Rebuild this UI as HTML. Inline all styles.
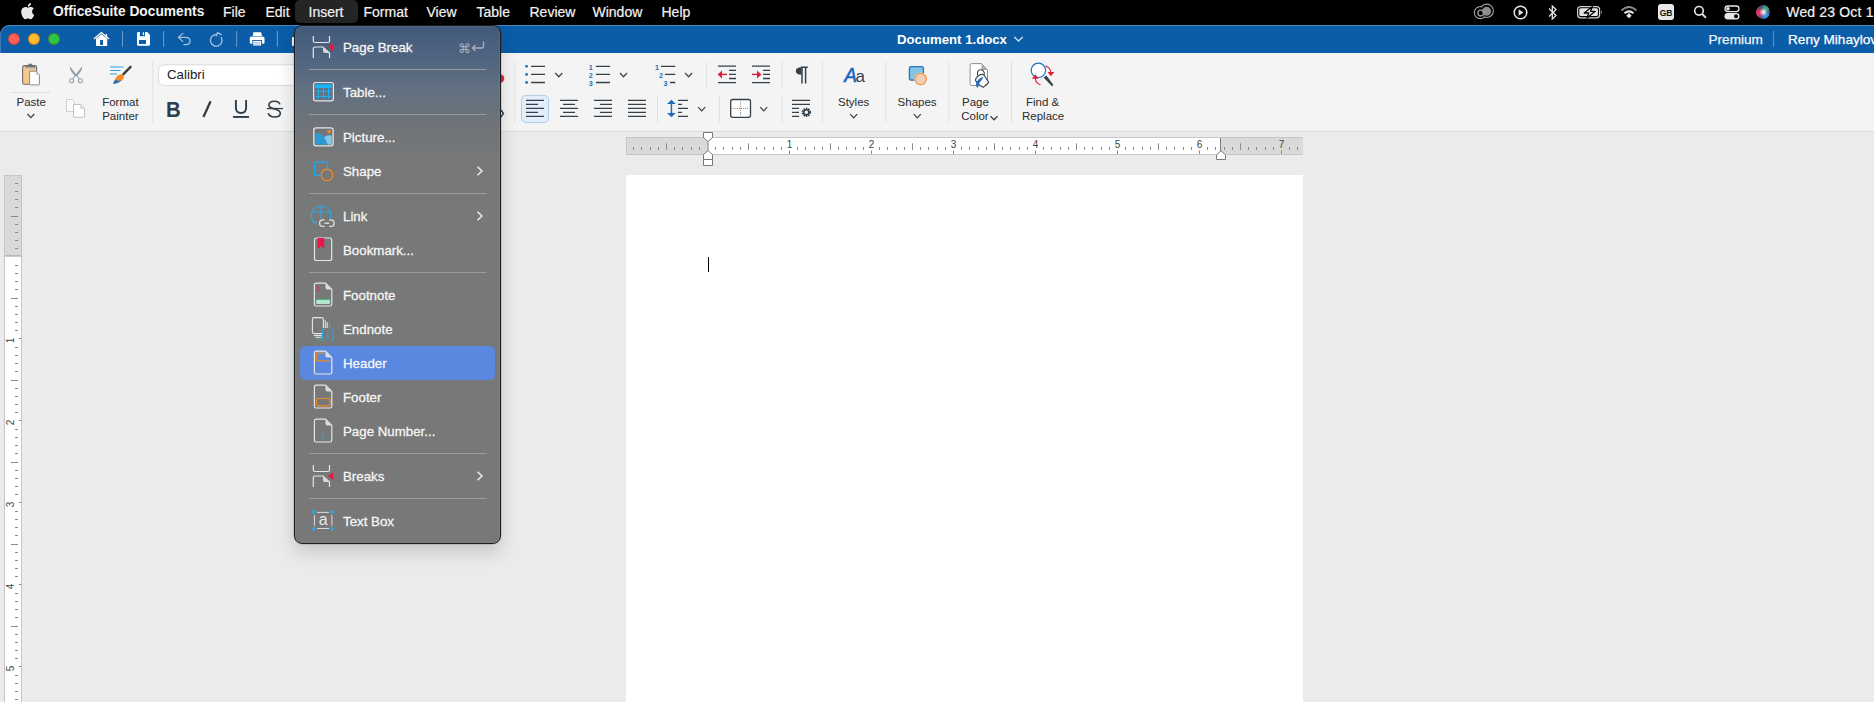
<!DOCTYPE html>
<html><head><meta charset="utf-8"><style>
html,body{margin:0;padding:0;}
body{width:1874px;height:702px;position:relative;overflow:hidden;background:#ebebeb;font-family:"Liberation Sans", sans-serif;}
.abs{position:absolute;}
.t{position:absolute;white-space:nowrap;line-height:1;z-index:3;}
#menubar{position:absolute;left:0;top:0;width:1874px;height:40px;background:#000;}
#titlebar{position:absolute;left:0;top:25px;width:1874px;height:28px;background:#0b5da7;border-top-left-radius:10px;box-shadow:inset 0 1px 0 #4a86c4, inset 1px 0 0 #3f7ab8;}
#ribbon{position:absolute;left:0;top:53px;width:1874px;height:78px;background:#f4f4f4;border-bottom:1px solid #dadada;}
#canvas{position:absolute;left:0;top:132px;width:1874px;height:570px;background:#ebebeb;}
.light{width:12px;height:12px;border-radius:50%;box-sizing:border-box;border:0.5px solid rgba(150,20,20,0.35);}
#menu{position:absolute;left:294px;top:25px;width:207px;height:518.5px;border-radius:8px;z-index:10;box-sizing:border-box;
 border:1px solid #1d1d1d;box-shadow:0 0 0 0.5px rgba(0,0,0,0.2), 0 8px 18px rgba(0,0,0,0.16), inset 0 0 0 0.5px rgba(255,255,255,0.12);
 background:linear-gradient(180deg,#42597a 0px,#4e6380 28px,#627080 65px,#6f7479 100px,#777878 135px,#787878 518px);}
</style></head><body>
<div id="menubar"></div>
<svg class="abs" style="left:19px;top:2px" width="16" height="18" viewBox="0 0 16 18">
<path fill="#e8e8e8" d="M13.1 9.6c0-2 1.6-2.9 1.7-3-0.9-1.4-2.4-1.6-2.9-1.6-1.2-0.1-2.4 0.7-3 0.7s-1.6-0.7-2.6-0.7C4.900 5.100 3.600 5.900 2.900 7.100 1.500 9.600 2.500 13.200 3.900 15.200c0.700 1 1.500 2.100 2.500 2.100 1-0.100 1.400-0.700 2.600-0.700s1.500 0.700 2.600 0.600c1.100 0 1.800-1 2.400-2 0.800-1.100 1.100-2.200 1.100-2.300-0.100 0-2.100-0.800-2.100-3.300zM11.200 3.600c0.500-0.700 0.900-1.600 0.800-2.500-0.800 0-1.700 0.500-2.300 1.200-0.500 0.600-0.900 1.500-0.800 2.400 0.900 0.100 1.700-0.400 2.300-1.100z"/></svg>
<div class="t" style="left:53.00px;top:5.16px;font-size:13.75px;color:#f2f2f2;font-weight:bold;">OfficeSuite Documents</div>
<div class="abs" style="left:295px;top:0px;width:63px;height:23px;background:#242525;border-radius:5px"></div>
<div class="t" style="left:223.00px;top:5.35px;font-size:14px;color:#f2f2f2;font-weight:normal;-webkit-text-stroke:0.2px #f2f2f2;">File</div>
<div class="t" style="left:265.50px;top:5.35px;font-size:14px;color:#f2f2f2;font-weight:normal;-webkit-text-stroke:0.2px #f2f2f2;">Edit</div>
<div class="t" style="left:308.50px;top:5.35px;font-size:14px;color:#f2f2f2;font-weight:normal;-webkit-text-stroke:0.2px #f2f2f2;">Insert</div>
<div class="t" style="left:363.50px;top:5.35px;font-size:14px;color:#f2f2f2;font-weight:normal;-webkit-text-stroke:0.2px #f2f2f2;">Format</div>
<div class="t" style="left:426.50px;top:5.35px;font-size:14px;color:#f2f2f2;font-weight:normal;-webkit-text-stroke:0.2px #f2f2f2;">View</div>
<div class="t" style="left:476.50px;top:5.35px;font-size:14px;color:#f2f2f2;font-weight:normal;-webkit-text-stroke:0.2px #f2f2f2;">Table</div>
<div class="t" style="left:529.50px;top:5.35px;font-size:14px;color:#f2f2f2;font-weight:normal;-webkit-text-stroke:0.2px #f2f2f2;">Review</div>
<div class="t" style="left:592.50px;top:5.35px;font-size:14px;color:#f2f2f2;font-weight:normal;-webkit-text-stroke:0.2px #f2f2f2;">Window</div>
<div class="t" style="left:661.50px;top:5.35px;font-size:14px;color:#f2f2f2;font-weight:normal;-webkit-text-stroke:0.2px #f2f2f2;">Help</div>
<svg class="abs" style="left:1470px;top:0px" width="310" height="25" viewBox="1470 0 310 25">
<circle cx="1480.4" cy="12.6" r="6" fill="none" stroke="#a0a0a0" stroke-width="1.3"/>
<circle cx="1486.7" cy="10.8" r="6.6" fill="none" stroke="#a0a0a0" stroke-width="1.3"/>
<circle cx="1480.4" cy="12.6" r="5.3" fill="#000"/>
<circle cx="1486.7" cy="10.8" r="5.9" fill="#000"/>
<circle cx="1486.6" cy="11.2" r="4.5" fill="#8c8c8c"/>
<circle cx="1480.8" cy="13.1" r="2.9" fill="none" stroke="#9a9a9a" stroke-width="1.3"/>
<circle cx="1520.5" cy="12.5" r="6.3" fill="none" stroke="#e6e6e6" stroke-width="1.5"/>
<path d="M1518.6 9.3 L1523.4 12.5 L1518.6 15.7z" fill="#e6e6e6"/>
<path d="M1549 8.5 L1556 15.5 L1552.3 19 V6 L1556 9.5 L1549 16.5" fill="none" stroke="#e6e6e6" stroke-width="1.3"/>
<rect x="1577.6" y="6.6" width="22" height="11.2" rx="3" fill="none" stroke="#cfcfcf" stroke-width="1.2"/>
<rect x="1579.3" y="8.3" width="18.6" height="7.8" rx="1.6" fill="#e4e4e4"/>
<path d="M1601 10.3 Q1602.8 12.2 1601 14.2z" fill="#bdbdbd"/>
<path d="M1592.4 6.4 L1584.2 13 H1588.8 L1587 17.9 L1595.2 11.3 H1590.6z" fill="#e4e4e4" stroke="#000" stroke-width="1.3" stroke-linejoin="round"/>
<path d="M1621.5 10.5 Q1629 3.5 1636.5 10.5" fill="none" stroke="#8a8a8a" stroke-width="1.8"/>
<path d="M1624.5 13.3 Q1629 9.5 1633.5 13.3" fill="none" stroke="#e6e6e6" stroke-width="2"/>
<path d="M1626.3 15.8 L1629 13 L1631.7 15.8 L1629 18.3z" fill="#e6e6e6"/>
<rect x="1658" y="4" width="16" height="16" rx="3" fill="#e8e8e8"/>
<text x="1666" y="16" font-family="Liberation Sans" font-weight="bold" font-size="8.5" text-anchor="middle" fill="#111">GB</text>
<circle cx="1699" cy="10.8" r="4.3" fill="none" stroke="#e6e6e6" stroke-width="1.6"/>
<path d="M1702.2 14 L1706 17.8" stroke="#e6e6e6" stroke-width="1.8"/>
<rect x="1725" y="6" width="14" height="5.6" rx="2.8" fill="none" stroke="#e6e6e6" stroke-width="1.3"/>
<circle cx="1728" cy="8.8" r="1.8" fill="#e6e6e6"/>
<rect x="1724.5" y="13" width="15" height="6.5" rx="3.2" fill="#e6e6e6"/>
<circle cx="1736" cy="16.2" r="2" fill="#000"/>
<defs><clipPath id="sc"><circle cx="1763" cy="12" r="7"/></clipPath>
<filter id="sb" x="-50%" y="-50%" width="200%" height="200%"><feGaussianBlur stdDeviation="1.3"/></filter></defs>
<g clip-path="url(#sc)">
<circle cx="1763" cy="12" r="7" fill="#4a4a7a"/>
<g filter="url(#sb)">
<circle cx="1758.5" cy="13" r="4" fill="#e0355a"/>
<circle cx="1766" cy="8" r="3.6" fill="#3aa37a"/>
<circle cx="1766" cy="16" r="3.8" fill="#3a8fd8"/>
<circle cx="1763.5" cy="12" r="2.2" fill="#ffffff"/>
</g>
</g>
</g>
</svg>
<div class="t" style="left:1786.30px;top:5.35px;font-size:14px;color:#f2f2f2;font-weight:normal;-webkit-text-stroke:0.2px #f2f2f2;letter-spacing:0.15px;">Wed 23 Oct</div>
<div class="t" style="left:1865.80px;top:5.35px;font-size:14px;color:#f2f2f2;font-weight:normal;-webkit-text-stroke:0.2px #f2f2f2;">1</div>
<div id="titlebar"></div>
<div class="abs light" style="left:8px;top:33px;background:#fe5f57"></div>
<div class="abs light" style="left:28px;top:33px;background:#febc2e"></div>
<div class="abs light" style="left:48px;top:33px;background:#28c840"></div>
<svg class="abs" style="left:88px;top:26px" width="210" height="27" viewBox="88 26 210 27">
<g fill="#fff">
<path d="M93.9 38.9 L101.4 32.6 L109 38.9" fill="none" stroke="#fff" stroke-width="1.3"/>
<path d="M96 38.6 L101.4 34.2 L107.2 38.8 V45.9 H96z M100.1 40.1 V45 H103 V40.1z" fill-rule="evenodd"/>
<rect x="105.6" y="34" width="1.5" height="3.2"/>
</g>
<g stroke="#6f9fd0" stroke-width="1"><path d="M122.5 31 V46.7 M163.6 31 V46.7 M236.7 31 V46.7 M277.4 31 V46.7"/></g>
<path d="M138.3 32.1 H147.2 L150 35 V44.5 Q150 45.8 148.7 45.8 H138.3 Q137 45.8 137 44.5 V33.4 Q137 32.1 138.3 32.1z M139.9 32.1 V36.2 H145 V32.1z M139 40.1 V43.9 H146 V40.1z" fill="#fff" fill-rule="evenodd"/>
<rect x="142.8" y="32.3" width="1.2" height="2.8" fill="#fff"/>
<path d="M182.8 33.4 L178.4 37.4 L182.8 41.4 M178.6 37.4 H185.6 Q190 37.4 190 41 Q190 44.6 185.6 44.6 H184" fill="none" stroke="#a7c2de" stroke-width="1.25" stroke-linecap="round" stroke-linejoin="round"/>
<path d="M216.2 34.6 A5.8 5.8 0 1 0 221.3 37.6" fill="none" stroke="#a7c2de" stroke-width="1.25" stroke-linecap="round"/>
<path d="M216.2 35.9 L217.6 32.6 L221.2 34.6" fill="none" stroke="#a7c2de" stroke-width="1.25" stroke-linecap="round" stroke-linejoin="round"/>
<path d="M253.2 32.3 H261.2 L262 36 H253z" fill="#fff"/>
<path d="M251.6 36.5 H262.8 Q264.5 36.5 264.5 38.3 V42.6 Q264.5 43.8 263.3 43.8 H251 Q249.8 43.8 249.8 42.6 V38.3 Q249.8 36.5 251.6 36.5z" fill="#fff"/>
<rect x="252.8" y="40.5" width="8.8" height="5.5" fill="#fff" stroke="#0b5da7" stroke-width="0.9"/>
<path d="M254.2 42.6 H260.3 M254.2 44.2 H260.3" stroke="#7aa4d0" stroke-width="0.7"/>
<rect x="292" y="37" width="5" height="9" rx="1.2" fill="#fff"/>
</svg>
<div class="t" style="left:897.00px;top:33.13px;font-size:13.2px;color:#ffffff;font-weight:bold;">Document 1.docx</div>
<svg class="abs" style="left:1013px;top:35px" width="12" height="8"><path d="M1.3 2 L5.5 6 L9.7 2" fill="none" stroke="#d5e3f2" stroke-width="1.3"/></svg>
<div class="t" style="left:1708.50px;top:32.79px;font-size:13.6px;color:#eef3f9;font-weight:normal;-webkit-text-stroke:0.25px #eef3f9;">Premium</div>
<div class="abs" style="left:1773px;top:31px;width:1px;height:16px;background:#5f8fc2"></div>
<div class="t" style="left:1788.00px;top:32.79px;font-size:13.6px;color:#ffffff;font-weight:normal;-webkit-text-stroke:0.25px #fff;">Reny Mihaylov</div>
<div id="ribbon"></div>
<div id="canvas"></div>
<svg class="abs" style="left:0;top:53px;z-index:2" width="1874" height="79" viewBox="0 53 1874 79">
<!-- Paste -->
<rect x="22.6" y="65.6" width="14" height="18.6" rx="1.8" fill="#f7c98f" stroke="#6f6f6f" stroke-width="1.1"/>
<path d="M25.5 68.2 V67 Q25.5 65.8 26.7 65.8 H28 Q28 63.6 30.3 63.6 Q32.6 63.6 32.6 65.8 H33.9 Q35.1 65.8 35.1 67 V68.2z" fill="#707070"/>
<rect x="26" y="67.3" width="8.6" height="0.9" fill="#cfcfcf"/>
<path d="M29.6 71.2 H35.8 L39.4 74.8 V84.2 Q39.4 84.9 38.7 84.9 H30.3 Q29.6 84.9 29.6 84.2z" fill="#fff" stroke="#8a8a8a" stroke-width="1"/>
<path d="M35.8 71.2 V74.8 H39.4z" fill="#c8c8c8"/>
<rect x="12" y="92" width="38" height="1" fill="#dedede"/>
<!-- scissors -->
<path d="M69.8 66.2 Q69.6 71 75.6 76.2 L76.6 75.2 Q72.8 69.8 69.8 66.2z" fill="#8f979e"/>
<path d="M82.2 66.2 Q82.4 71 76.4 76.2 L75.4 75.2 Q79.2 69.8 82.2 66.2z" fill="#8f979e"/>
<path d="M75.2 75.6 L72.6 79 M76.8 75.6 L79.4 79" stroke="#9aa2aa" stroke-width="1.1"/>
<circle cx="71.6" cy="80.8" r="2" fill="none" stroke="#9aa2aa" stroke-width="1.1"/>
<circle cx="80.4" cy="80.8" r="2" fill="none" stroke="#9aa2aa" stroke-width="1.1"/>
<circle cx="76" cy="74.6" r="0.9" fill="#5b9ad6"/>
<!-- copy -->
<path d="M66.5 99.5 H72.5 L74.5 101.5 V111.5 H66.5z" fill="#fafafa" stroke="#cfcfcf" stroke-width="1"/>
<path d="M73.5 104.5 H80.8 L84.6 108.3 V117.2 H73.5z" fill="#fff" stroke="#c2c2c2" stroke-width="1"/>
<path d="M80.8 104.5 V108.3 H84.6" fill="#e6e6e6" stroke="#c2c2c2" stroke-width="0.8"/>
<!-- format painter -->
<path d="M110 67 H123.5 M110 70.5 H120.5 M110 74 H117" stroke="#2ea3df" stroke-width="1.1"/>
<path d="M130.6 66.8 L123 74.6" stroke="#34414b" stroke-width="2.4" stroke-linecap="round"/>
<path d="M123.2 74.2 Q125 77.5 121.8 80.5 Q118.5 83.2 113.2 84 Q114.6 80.5 115.6 78 Q117.8 73.6 123.2 74.2z" fill="#f08a2a"/>
<path d="M122 80.3 Q118.5 83.2 113.2 84 Q114 81.8 114.8 80.1 Q118.5 81.2 122 80.3z" fill="#1c6ec2"/>
<!-- separators -->
<g fill="#e0e0e0">
<rect x="152.3" y="61.5" width="1" height="61"/>
<rect x="514.3" y="61.5" width="1" height="61.3"/>
<rect x="706.2" y="61.5" width="1" height="27"/>
<rect x="781.3" y="61.5" width="1" height="27"/>
<rect x="657" y="95" width="1" height="27.5"/>
<rect x="719" y="95" width="1" height="27.5"/>
<rect x="781.3" y="95" width="1" height="27.5"/>
<rect x="822.2" y="61.5" width="1" height="61"/>
<rect x="885.2" y="61.5" width="1" height="61"/>
<rect x="948.6" y="61.5" width="1" height="61"/>
<rect x="1011" y="61.5" width="1" height="61"/>
</g>
<!-- font box -->
<rect x="158.5" y="64.8" width="200" height="20.6" rx="5.5" fill="#fff" stroke="#d2d2d2" stroke-width="0.8"/>
<!-- B I U S -->
<text x="165.9" y="117.1" font-family="Liberation Sans" font-weight="bold" font-size="22.6" fill="#2f3e4b" transform="translate(166 0) scale(0.9 1) translate(-166 0)">B</text>
<path d="M210.6 101.3 L203.4 117" stroke="#2f3e4b" stroke-width="2.3"/>
<path d="M235.9 100.1 V107.8 Q235.9 113 241 113 Q246.1 113 246.1 107.8 V100.1" fill="none" stroke="#2f3e4b" stroke-width="1.9"/>
<rect x="233" y="116" width="16" height="1.9" fill="#2f3e4b"/>
<path d="M279.9 104.4 C279.4 102.3 277.3 101.2 274.5 101.2 C271.2 101.2 268.9 102.7 268.9 105 C268.9 107.4 271.3 108.3 274.6 109 C278 109.8 280.3 110.8 280.3 113.3 C280.3 115.7 277.8 117 274.5 117 C271.2 117 268.9 115.7 268.2 113.3" fill="none" stroke="#2f3e4b" stroke-width="1.6"/>
<rect x="267" y="107.9" width="16" height="1.3" fill="#2f3e4b"/>
<!-- partial behind menu -->
<circle cx="500" cy="78.5" r="4.3" fill="#e8203f"/>
<path d="M501 110 L503.5 113.5 L501 117" stroke="#34414b" stroke-width="1.4" fill="none"/>
<!-- bullets -->
<g fill="#1f6fbf"><circle cx="526.6" cy="66.3" r="1.4"/><circle cx="526.6" cy="74.4" r="1.4"/><circle cx="526.6" cy="82.5" r="1.4"/></g>
<path d="M531 66.3 H545 M531 74.4 H545 M531 82.5 H545" stroke="#34414b" stroke-width="1.3"/>
<g fill="none" stroke="#3a4650" stroke-width="1.3">
<path d="M555.3 73 L558.8 76.8 L562.3 73"/>
<path d="M620 73 L623.5 76.8 L627 73"/>
<path d="M685.1 73 L688.6 76.8 L692.1 73"/>
<path d="M698.2 107.1 L701.7 110.9 L705.2 107.1"/>
<path d="M760.2 107.1 L763.7 110.9 L767.2 107.1"/>
<path d="M850.2 114.1 L853.7 117.9 L857.2 114.1"/>
<path d="M913.8 114.1 L917.3 117.9 L920.8 114.1"/>
<path d="M990.5 116.2 L994 119.8 L997.5 116.2"/>
<path d="M27.4 114 L30.9 117.6 L34.4 114"/>
</g>
<!-- numbering -->
<g font-family="Liberation Sans" font-weight="bold" font-size="7.2" fill="#1f6fbf">
<text x="588.8" y="69.6">1</text><text x="588.8" y="77.6">2</text><text x="588.8" y="85.6">3</text>
<text x="655" y="69.6">1</text><text x="659" y="77.6">2</text><text x="663.5" y="85.6">3</text>
</g>
<path d="M596 66.3 H610 M596 74.4 H610 M596 82.5 H610" stroke="#34414b" stroke-width="1.3"/>
<path d="M661 66.3 H675.3 M665 74.4 H675.3 M670 82.5 H675.3" stroke="#34414b" stroke-width="1.3"/>
<!-- indent -->
<path d="M718 66.2 H736 M729 70.3 H736 M729 74.4 H736 M729 78.5 H736 M718 82.6 H736" stroke="#34414b" stroke-width="1.3"/>
<path d="M720 74.4 H727" stroke="#e01e3c" stroke-width="1.4"/>
<path d="M717.6 74.4 L722 70.4 V78.4z" fill="#e01e3c"/>
<path d="M752 66.2 H770 M763 70.3 H770 M763 74.4 H770 M763 78.5 H770 M752 82.6 H770" stroke="#34414b" stroke-width="1.3"/>
<path d="M752 74.4 H759" stroke="#e01e3c" stroke-width="1.4"/>
<path d="M761.4 74.4 L757 70.4 V78.4z" fill="#e01e3c"/>
<!-- pilcrow -->
<path d="M801.5 67.3 Q795.8 67.3 795.8 71 Q795.8 74.8 801.5 74.8z" fill="#34414b"/>
<path d="M800.8 67.3 H807.8 M802 67.3 V83.6 M805.6 67.3 V83.6" stroke="#34414b" stroke-width="1.5"/>
<!-- align -->
<rect x="521.5" y="95.3" width="27" height="27.2" rx="4.5" fill="#e2eef9" stroke="#a9c9e8" stroke-width="0.9"/>
<g stroke="#34414b" stroke-width="1.3">
<path d="M526 100.4 H544 M526 104.4 H538 M526 108.4 H544 M526 112.4 H538 M526 116.4 H544"/>
<path d="M560 100.4 H578 M563 104.4 H575 M560 108.4 H578 M563 112.4 H575 M560 116.4 H578"/>
<path d="M594 100.4 H612 M600 104.4 H612 M594 108.4 H612 M600 112.4 H612 M594 116.4 H612"/>
<path d="M628 100.4 H646 M628 104.4 H646 M628 108.4 H646 M628 112.4 H646 M628 116.4 H646"/>
<path d="M678 100.4 H688 M678 104.4 H682 M678 108.4 H688 M678 112.4 H682 M678 116.4 H688"/>
</g>
<path d="M671.4 102 V115" stroke="#1f6fbf" stroke-width="1.5"/>
<path d="M667 104 L671.4 99.8 L675.8 104z M667 113 L671.4 117.2 L675.8 113z" fill="#1f6fbf"/>
<!-- borders -->
<rect x="730.7" y="99.5" width="19.8" height="17.8" rx="2" fill="#fff" stroke="#34414b" stroke-width="1.3"/>
<path d="M740.6 101.5 V115.5 M732.5 108.4 H748.7" stroke="#555" stroke-width="0.8" stroke-dasharray="1 1.1"/>
<!-- para settings -->
<path d="M792 100.4 H810 M792 104.4 H810 M792 108.4 H799 M792 112.4 H799 M792 116.4 H799" stroke="#34414b" stroke-width="1.3"/>
<circle cx="806.3" cy="112.3" r="3.6" fill="none" stroke="#34414b" stroke-width="2.2" stroke-dasharray="1.4 0.9"/>
<circle cx="806.3" cy="112.3" r="2.6" fill="none" stroke="#34414b" stroke-width="1.6"/>
<!-- styles -->
<text x="844.3" y="81.6" font-family="Liberation Sans" font-style="italic" font-size="20.5" fill="#1565c0" stroke="#1565c0" stroke-width="0.6" transform="translate(844.3 0) scale(0.92 1) translate(-844.3 0)">A</text>
<text x="855.6" y="81.6" font-family="Liberation Sans" font-size="17" fill="#34414b">a</text>
<!-- shapes -->
<rect x="909.4" y="66.6" width="14" height="13.6" rx="1.8" fill="#7fc6e6" stroke="#2a6fbf" stroke-width="1.3"/>
<circle cx="920.7" cy="79" r="6.6" fill="#f4f4f4"/>
<circle cx="920.7" cy="79" r="5.7" fill="#f3d0b4" stroke="#f08a2a" stroke-width="1.1"/>
<!-- page color -->
<path d="M971.6 63.6 H981.6 L987.5 70 V84 Q987.5 85.5 986 85.5 H971.6 Q970.1 85.5 970.1 84 V65.1 Q970.1 63.6 971.6 63.6z" fill="#fff" stroke="#8f8f8f" stroke-width="1"/>
<path d="M981.6 63.6 L987.5 70 H981.6z" fill="#a9a9a9"/>
<path d="M977.6 75.5 Q976.8 69.8 980.5 69.8 Q984 69.8 984.6 74.5" fill="none" stroke="#34414b" stroke-width="1.1"/>
<path d="M975.3 80.5 Q976 77 979.5 75 Q983 73.5 984.3 75.5 L988.7 82.3 L983.3 87.3 L980.3 85.8" fill="#fff" stroke="#34414b" stroke-width="1.1" stroke-linejoin="round"/>
<path d="M975.3 80.5 L980.3 85.8" fill="none" stroke="#34414b" stroke-width="1.1"/><path d="M983.5 77.2 Q982.5 76.5 979 79 Q976 81.5 976 84.3 Q976 86.5 977.3 88 Q978.8 86.8 978.2 84.5 Q980.5 82 983.5 77.2z" fill="#1f6fbf"/>
<!-- find replace -->
<circle cx="1038.4" cy="70.3" r="7.2" fill="#fff" stroke="#1f6fbf" stroke-width="1.2"/>
<path d="M1043.6 77.4 L1046.4 75.4 L1053.4 85 L1052 86.3z" fill="#34414b"/>
<path d="M1045.5 66 Q1050.5 67.5 1051 73" fill="none" stroke="#e01e3c" stroke-width="1.1"/>
<path d="M1047.6 72 L1054.3 72 L1050.9 76.2z" fill="#e01e3c"/>
<path d="M1040.5 84.8 Q1035.5 83.5 1035.3 78" fill="none" stroke="#e01e3c" stroke-width="1.1"/>
<path d="M1031.9 78.8 L1038.8 78.8 L1035.4 74.6z" fill="#e01e3c"/>
</svg>
<div class="t" style="left:16.50px;top:97.07px;font-size:11.5px;color:#2b2b2b;font-weight:normal;">Paste</div>
<div class="t" style="left:102.20px;top:97.07px;font-size:11.5px;color:#2b2b2b;font-weight:normal;">Format</div>
<div class="t" style="left:102.20px;top:111.17px;font-size:11.5px;color:#2b2b2b;font-weight:normal;">Painter</div>
<div class="t" style="left:167.00px;top:67.54px;font-size:13.3px;color:#222;font-weight:normal;">Calibri</div>
<div class="t" style="left:838.00px;top:96.67px;font-size:11.5px;color:#2b2b2b;font-weight:normal;">Styles</div>
<div class="t" style="left:897.60px;top:96.87px;font-size:11.5px;color:#2b2b2b;font-weight:normal;">Shapes</div>
<div class="t" style="left:962.00px;top:96.87px;font-size:11.5px;color:#2b2b2b;font-weight:normal;">Page</div>
<div class="t" style="left:961.20px;top:110.87px;font-size:11.5px;color:#2b2b2b;font-weight:normal;">Color</div>
<div class="t" style="left:1026.00px;top:96.87px;font-size:11.5px;color:#2b2b2b;font-weight:normal;">Find &amp;</div>
<div class="t" style="left:1022.00px;top:110.87px;font-size:11.5px;color:#2b2b2b;font-weight:normal;">Replace</div>
<svg class="abs" style="left:0;top:125px" width="1874" height="577" viewBox="0 125 1874 577">
<rect x="626.5" y="137.5" width="675.5" height="17" fill="#fff" stroke="#c6c6c6" stroke-width="1"/>
<rect x="627" y="138" width="80.5" height="16" fill="#d9d9d9"/>
<rect x="1220.5" y="138" width="81" height="16" fill="#d9d9d9"/>
<path d="M633.5 147 V150 M641.5 147 V150 M650.5 147 V150 M658.5 147 V150 M666.5 143.3 V150 M674.5 147 V150 M682.5 147 V150 M691.5 147 V150 M699.5 147 V150 M715.5 147 V150 M723.5 147 V150 M732.5 147 V150 M740.5 147 V150 M748.5 143.3 V150 M756.5 147 V150 M764.5 147 V150 M773.5 147 V150 M781.5 147 V150 M789.5 150.5 V154 M797.5 147 V150 M805.5 147 V150 M814.5 147 V150 M822.5 147 V150 M830.5 143.3 V150 M838.5 147 V150 M846.5 147 V150 M855.5 147 V150 M863.5 147 V150 M871.5 150.5 V154 M879.5 147 V150 M887.5 147 V150 M896.5 147 V150 M904.5 147 V150 M912.5 143.3 V150 M920.5 147 V150 M928.5 147 V150 M937.5 147 V150 M945.5 147 V150 M953.5 150.5 V154 M961.5 147 V150 M969.5 147 V150 M978.5 147 V150 M986.5 147 V150 M994.5 143.3 V150 M1002.5 147 V150 M1010.5 147 V150 M1019.5 147 V150 M1027.5 147 V150 M1035.5 150.5 V154 M1043.5 147 V150 M1051.5 147 V150 M1060.5 147 V150 M1068.5 147 V150 M1076.5 143.3 V150 M1084.5 147 V150 M1092.5 147 V150 M1101.5 147 V150 M1109.5 147 V150 M1117.5 150.5 V154 M1125.5 147 V150 M1133.5 147 V150 M1142.5 147 V150 M1150.5 147 V150 M1158.5 143.3 V150 M1166.5 147 V150 M1174.5 147 V150 M1183.5 147 V150 M1191.5 147 V150 M1199.5 150.5 V154 M1207.5 147 V150 M1215.5 147 V150 M1224.5 147 V150 M1232.5 147 V150 M1240.5 143.3 V150 M1248.5 147 V150 M1256.5 147 V150 M1265.5 147 V150 M1273.5 147 V150 M1281.5 150.5 V154 M1289.5 147 V150 M1297.5 147 V150" stroke="#8a8a8a" stroke-width="1"/>
<text x="789.5" y="147.8" font-family="Liberation Sans" font-size="10" fill="#444" text-anchor="middle">1</text>
<text x="871.5" y="147.8" font-family="Liberation Sans" font-size="10" fill="#444" text-anchor="middle">2</text>
<text x="953.5" y="147.8" font-family="Liberation Sans" font-size="10" fill="#444" text-anchor="middle">3</text>
<text x="1035.5" y="147.8" font-family="Liberation Sans" font-size="10" fill="#444" text-anchor="middle">4</text>
<text x="1117.5" y="147.8" font-family="Liberation Sans" font-size="10" fill="#444" text-anchor="middle">5</text>
<text x="1199.5" y="147.8" font-family="Liberation Sans" font-size="10" fill="#444" text-anchor="middle">6</text>
<text x="1281.5" y="147.8" font-family="Liberation Sans" font-size="10" fill="#444" text-anchor="middle">7</text>
<path d="M703.5 132.5 H712.5 V137.5 L708 141.5 L703.5 137.5z" fill="#fff" stroke="#7a7a7a" stroke-width="1"/>
<path d="M708 150.5 L712.5 154.5 V165.5 H703.5 V154.5z" fill="#fff" stroke="#7a7a7a" stroke-width="1"/>
<path d="M703.5 159.5 H712.5" stroke="#7a7a7a" stroke-width="1"/>
<path d="M708 141.5 V150.5" stroke="#7a7a7a" stroke-width="1"/>
<path d="M1220.5 138 V151" stroke="#7a7a7a" stroke-width="1"/>
<path d="M1221 150.8 L1225.5 154.8 V159.5 H1216.5 V154.8z" fill="#fff" stroke="#7a7a7a" stroke-width="1"/>
<rect x="4.5" y="175.5" width="17" height="530" fill="#fff" stroke="#c6c6c6" stroke-width="1"/>
<rect x="5" y="176" width="16" height="80" fill="#d9d9d9"/>
<rect x="5" y="255.5" width="16" height="1" fill="#9a9a9a"/>
<path d="M15 183.5 H18 M15 191.5 H18 M15 199.5 H18 M15 207.5 H18 M11 216.5 H18 M15 224.5 H18 M15 232.5 H18 M15 240.5 H18 M15 248.5 H18 M15 265.5 H18 M15 273.5 H18 M15 281.5 H18 M15 289.5 H18 M11 298.5 H18 M15 306.5 H18 M15 314.5 H18 M15 322.5 H18 M15 330.5 H18 M19 338.5 H21.5 M15 347.5 H18 M15 355.5 H18 M15 363.5 H18 M15 371.5 H18 M11 380.5 H18 M15 388.5 H18 M15 396.5 H18 M15 404.5 H18 M15 412.5 H18 M19 420.5 H21.5 M15 429.5 H18 M15 437.5 H18 M15 445.5 H18 M15 453.5 H18 M11 462.5 H18 M15 470.5 H18 M15 478.5 H18 M15 486.5 H18 M15 494.5 H18 M19 502.5 H21.5 M15 511.5 H18 M15 519.5 H18 M15 527.5 H18 M15 535.5 H18 M11 544.5 H18 M15 552.5 H18 M15 560.5 H18 M15 568.5 H18 M15 576.5 H18 M19 584.5 H21.5 M15 593.5 H18 M15 601.5 H18 M15 609.5 H18 M15 617.5 H18 M11 626.5 H18 M15 634.5 H18 M15 642.5 H18 M15 650.5 H18 M15 658.5 H18 M19 666.5 H21.5 M15 675.5 H18 M15 683.5 H18 M15 691.5 H18 M15 699.5 H18" stroke="#8a8a8a" stroke-width="1"/>
<text x="0" y="0" transform="translate(14.3 340.5) rotate(-90)" font-family="Liberation Sans" font-size="10" fill="#444" text-anchor="middle">1</text>
<text x="0" y="0" transform="translate(14.3 422.5) rotate(-90)" font-family="Liberation Sans" font-size="10" fill="#444" text-anchor="middle">2</text>
<text x="0" y="0" transform="translate(14.3 504.5) rotate(-90)" font-family="Liberation Sans" font-size="10" fill="#444" text-anchor="middle">3</text>
<text x="0" y="0" transform="translate(14.3 586.5) rotate(-90)" font-family="Liberation Sans" font-size="10" fill="#444" text-anchor="middle">4</text>
<text x="0" y="0" transform="translate(14.3 668.5) rotate(-90)" font-family="Liberation Sans" font-size="10" fill="#444" text-anchor="middle">5</text>
<rect x="626" y="175" width="677" height="530" fill="#fff"/>
<rect x="708" y="257" width="1" height="15" fill="#000"/>
</svg>
<div id="menu"></div>
<div class="abs" style="left:300px;top:346px;width:195px;height:34px;background:#5a87e0;border-radius:5px;z-index:11"></div>
<div class="t" style="left:343.00px;top:41.04px;font-size:13.3px;color:#f6f6f6;font-weight:normal;z-index:13;-webkit-text-stroke:0.28px #f6f6f6;">Page Break</div>
<div class="t" style="left:343.00px;top:86.04px;font-size:13.3px;color:#f6f6f6;font-weight:normal;z-index:13;-webkit-text-stroke:0.28px #f6f6f6;">Table...</div>
<div class="t" style="left:343.00px;top:131.04px;font-size:13.3px;color:#f6f6f6;font-weight:normal;z-index:13;-webkit-text-stroke:0.28px #f6f6f6;">Picture...</div>
<div class="t" style="left:343.00px;top:165.04px;font-size:13.3px;color:#f6f6f6;font-weight:normal;z-index:13;-webkit-text-stroke:0.28px #f6f6f6;">Shape</div>
<div class="t" style="left:343.00px;top:210.04px;font-size:13.3px;color:#f6f6f6;font-weight:normal;z-index:13;-webkit-text-stroke:0.28px #f6f6f6;">Link</div>
<div class="t" style="left:343.00px;top:244.04px;font-size:13.3px;color:#f6f6f6;font-weight:normal;z-index:13;-webkit-text-stroke:0.28px #f6f6f6;">Bookmark...</div>
<div class="t" style="left:343.00px;top:289.04px;font-size:13.3px;color:#f6f6f6;font-weight:normal;z-index:13;-webkit-text-stroke:0.28px #f6f6f6;">Footnote</div>
<div class="t" style="left:343.00px;top:323.04px;font-size:13.3px;color:#f6f6f6;font-weight:normal;z-index:13;-webkit-text-stroke:0.28px #f6f6f6;">Endnote</div>
<div class="t" style="left:343.00px;top:357.04px;font-size:13.3px;color:#f6f6f6;font-weight:normal;z-index:13;-webkit-text-stroke:0.28px #f6f6f6;">Header</div>
<div class="t" style="left:343.00px;top:391.04px;font-size:13.3px;color:#f6f6f6;font-weight:normal;z-index:13;-webkit-text-stroke:0.28px #f6f6f6;">Footer</div>
<div class="t" style="left:343.00px;top:425.04px;font-size:13.3px;color:#f6f6f6;font-weight:normal;z-index:13;-webkit-text-stroke:0.28px #f6f6f6;">Page Number...</div>
<div class="t" style="left:343.00px;top:470.04px;font-size:13.3px;color:#f6f6f6;font-weight:normal;z-index:13;-webkit-text-stroke:0.28px #f6f6f6;">Breaks</div>
<div class="t" style="left:343.00px;top:515.04px;font-size:13.3px;color:#f6f6f6;font-weight:normal;z-index:13;-webkit-text-stroke:0.28px #f6f6f6;">Text Box</div>
<svg class="abs" style="left:290px;top:20px;z-index:12" width="220" height="530" viewBox="290 20 220 530">
<path d="M313.3 36.0 V41.0 Q313.3 42.5 314.8 42.5 H328 Q329.5 42.5 329.5 41.0 V36.0" fill="none" stroke="#e6e6e6" stroke-width="1.2"/>
<path d="M313.3 58.0 V48.5 Q313.3 47.0 314.8 47.0 H323 L329.5 53.0 V58.0" fill="none" stroke="#e6e6e6" stroke-width="1.2"/>
<path d="M323 47.0 L329.5 53.0 H325 Q323 53.0 323 51.0z" fill="#d8d8d8"/>
<path d="M328 47.3 L333.2 43.3 V51.0z" fill="#e8183c"/>
<rect x="309" y="69.0" width="177.5" height="1" fill="#a2a2a2" opacity="0.85"/>
<rect x="313.6" y="82.5" width="19.8" height="18.3" rx="2" fill="none" stroke="#e6e6e6" stroke-width="1.2"/>
<rect x="315.3" y="84.2" width="16.4" height="3.8" fill="#19b5f7"/>
<path d="M315.3 91.3 H331.7 M315.3 96.6 H331.7 M318.3 88.0 V99.0 M323.4 88.0 V99.0 M328.5 88.0 V99.0" stroke="#19b5f7" stroke-width="1"/>
<rect x="309" y="114.0" width="177.5" height="1" fill="#a2a2a2" opacity="0.85"/>
<rect x="313.8" y="127.8" width="19.3" height="18" rx="2.2" fill="none" stroke="#e6e6e6" stroke-width="1.3"/>
<path d="M315.3 132.8 Q325.5 133.0 327.2 144.6 H315.3z" fill="#2c9ad6"/>
<path d="M324 137.3 Q327 134.4 331.7 135.4 V144.6 H327.4 Q326.6 140.0 324 137.3z" fill="#82c9e6"/>
<circle cx="329.1" cy="131.6" r="1.8" fill="#f08a24"/>
<path d="M320.5 175.3 H316 Q314.6 175.3 314.6 173.9 V163.6 Q314.6 162.2 316 162.2 H326.3 Q327.7 162.2 327.7 163.6 V168.5" fill="none" stroke="#1aabf0" stroke-width="1.2"/>
<circle cx="327" cy="174.9" r="5.8" fill="none" stroke="#f08a24" stroke-width="1.2"/>
<path d="M477.5 166.7 L482 171.0 L477.5 175.3" fill="none" stroke="#ececec" stroke-width="1.5"/>
<rect x="309" y="193.0" width="177.5" height="1" fill="#a2a2a2" opacity="0.85"/>
<circle cx="321" cy="215.5" r="9.8" fill="none" stroke="#2aa8e6" stroke-width="1.1"/>
<path d="M321 205.7 V219.5 M311.6 213.0 Q321 210.5 330.4 213.0" fill="none" stroke="#2aa8e6" stroke-width="1.1"/>
<rect x="317.6" y="218.2" width="18.5" height="10" rx="5" fill="#777"/>
<path d="M312 220.5 L316 222.5" stroke="#2aa8e6" stroke-width="1.1"/>
<path d="M324.5 219.9 H322.9 Q319.6 219.9 319.6 223.2 Q319.6 226.4 322.9 226.4 H324.5 M329.2 219.9 H330.8 Q334.1 219.9 334.1 223.2 Q334.1 226.4 330.8 226.4 H329.2" fill="none" stroke="#e4e4e4" stroke-width="1.3"/>
<path d="M324.5 223.2 H329.2" stroke="#e4e4e4" stroke-width="1.3"/>
<path d="M477.5 211.7 L482 216.0 L477.5 220.3" fill="none" stroke="#ececec" stroke-width="1.5"/>
<rect x="314.5" y="238.0" width="17.2" height="22.5" rx="2" fill="none" stroke="#e6e6e6" stroke-width="1.2"/>
<path d="M317.7 238.0 H324.3 V248.8 L321 246.0 L317.7 248.8z" fill="#e8194a"/>
<rect x="309" y="272.0" width="177.5" height="1" fill="#a2a2a2" opacity="0.85"/>
<path d="M316.2 283.2 H325.5 L331.8 289.5 V304.2 Q331.8 306.0 330 306.0 H316.2 Q314.4 306.0 314.4 304.2 V285.0 Q314.4 283.2 316.2 283.2z" fill="none" stroke="#e6e6e6" stroke-width="1.2"/>
<path d="M325.5 283.2 L331.8 289.5 H327.3 Q325.5 289.5 325.5 287.7z" fill="#dcdcdc"/>
<text x="316.6" y="290.7" font-family="Liberation Sans" font-size="6.5" fill="#e8183c">1</text>
<rect x="316.2" y="299.2" width="13.8" height="4.8" rx="1" fill="#b9e5d0"/>
<rect x="316.2" y="299.0" width="13.8" height="1.1" fill="#3cbf7d"/>
<path d="M322.5 333.5 H314 Q312.4 333.5 312.4 332.0 V319.2 Q312.4 317.6 314 317.6 H321.5 Q323.4 317.6 323.4 319.5 V328.0" fill="none" stroke="#e6e6e6" stroke-width="1.1"/>
<path d="M325.3 320.2 V328.0 M313.8 335.4 H321.5 M327.2 322.0 V328.0 M315.3 337.3 H321.5" fill="none" stroke="#e6e6e6" stroke-width="1.1"/>
<path d="M329.4 323.0 V328.0 M317 339.3 H321" stroke="#3cbf7d" stroke-width="1.1"/>
<path d="M324.6 329.0 Q322.6 329.0 322.6 331.0 V338.5 Q322.6 340.5 324.6 340.5 M331.2 329.0 Q333.2 329.0 333.2 331.0 V338.5 Q333.2 340.5 331.2 340.5 M327.9 333.3 V338.8" fill="none" stroke="#2aa8e6" stroke-width="1.1"/>
<circle cx="327.9" cy="331.0" r="0.75" fill="#2aa8e6"/>
<path d="M316.2 351.2 H325.5 L331.8 357.5 V372.2 Q331.8 374.0 330 374.0 H316.2 Q314.4 374.0 314.4 372.2 V353.0 Q314.4 351.2 316.2 351.2z" fill="none" stroke="#e6e6e6" stroke-width="1.2"/>
<path d="M325.5 351.2 L331.8 357.5 H327.3 Q325.5 357.5 325.5 355.7z" fill="#dcdcdc"/>
<path d="M330 360.9 H317.5 Q316.4 360.9 316.4 359.8 V354.2 Q316.4 353.1 317.5 353.1 H324" fill="none" stroke="#f08a24" stroke-width="1.2"/>
<path d="M316.2 385.2 H325.5 L331.8 391.5 V406.2 Q331.8 408.0 330 408.0 H316.2 Q314.4 408.0 314.4 406.2 V387.0 Q314.4 385.2 316.2 385.2z" fill="none" stroke="#e6e6e6" stroke-width="1.2"/>
<path d="M325.5 385.2 L331.8 391.5 H327.3 Q325.5 391.5 325.5 389.7z" fill="#dcdcdc"/>
<rect x="316.4" y="398.5" width="13.5" height="7.3" rx="1.8" fill="none" stroke="#f08a24" stroke-width="1.2"/>
<path d="M316.2 419.2 H325.5 L331.8 425.5 V440.2 Q331.8 442.0 330 442.0 H316.2 Q314.4 442.0 314.4 440.2 V421.0 Q314.4 419.2 316.2 419.2z" fill="none" stroke="#e6e6e6" stroke-width="1.2"/>
<path d="M325.5 419.2 L331.8 425.5 H327.3 Q325.5 425.5 325.5 423.7z" fill="#dcdcdc"/>
<text x="321.6" y="438.7" font-family="Liberation Sans" font-weight="bold" font-size="6.5" fill="#2aa8e6">1</text>
<rect x="309" y="453.0" width="177.5" height="1" fill="#a2a2a2" opacity="0.85"/>
<path d="M313.3 465.0 V470.0 Q313.3 471.5 314.8 471.5 H328 Q329.5 471.5 329.5 470.0 V465.0" fill="none" stroke="#e6e6e6" stroke-width="1.2"/>
<path d="M313.3 487.0 V477.5 Q313.3 476.0 314.8 476.0 H323 L329.5 482.0 V487.0" fill="none" stroke="#e6e6e6" stroke-width="1.2"/>
<path d="M323 476.0 L329.5 482.0 H325 Q323 482.0 323 480.0z" fill="#d8d8d8"/>
<path d="M328 476.3 L333.2 472.3 V480.0z" fill="#e8183c"/>
<path d="M477.5 471.7 L482 476.0 L477.5 480.3" fill="none" stroke="#ececec" stroke-width="1.5"/>
<rect x="309" y="498.0" width="177.5" height="1" fill="#a2a2a2" opacity="0.85"/>
<path d="M317.2 512.4 H329 M317.2 528.5 H329 M314.4 515.0 V525.8 M331.9 515.0 V525.8" stroke="#e6e6e6" stroke-width="0.9"/>
<circle cx="314.1" cy="512.0" r="1.9" fill="#2aa8e6"/>
<circle cx="332.2" cy="512.0" r="1.9" fill="#2aa8e6"/>
<circle cx="314.1" cy="528.8" r="1.9" fill="#2aa8e6"/>
<circle cx="332.2" cy="528.8" r="1.9" fill="#2aa8e6"/>
<text x="323.2" y="525.3" font-family="Liberation Sans" font-size="16" fill="#e6e6e6" text-anchor="middle">a</text>
</svg>
<div class="t" style="left:458.30px;top:41.60px;font-size:13px;color:#aab3be;font-weight:normal;z-index:13;">&#8984;</div>
<svg class="abs" style="left:470px;top:40px;z-index:13" width="16" height="14"><path d="M13.5 1.5 V6.8 Q13.5 8 12.3 8 H2.5 M5.5 5 L2.3 8 L5.5 11" fill="none" stroke="#a9b2bd" stroke-width="1.3"/></svg>
</body></html>
